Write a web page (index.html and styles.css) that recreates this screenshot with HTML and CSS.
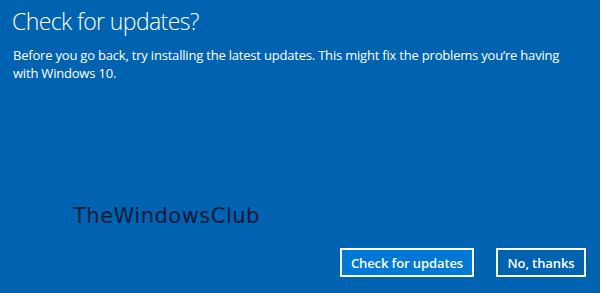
FILE: index.html
```html
<!DOCTYPE html>
<html>
<head>
<meta charset="utf-8">
<link rel="stylesheet" href="styles.css">
</head>
<body>
<div class="dialog">
  <div class="content">
    <h1 class="title">Check for updates?</h1>
    <p class="desc">Before you go back, try installing the latest updates. This might fix the problems you’re having with Windows 10.</p>
  </div>
  <div class="mark">TheWindowsClub</div>
  <div class="actions">
    <button class="btn primary">Check for updates</button>
    <button class="btn">No, thanks</button>
  </div>
</div>
</body>
</html>
```
FILE: styles.css
```css
html, body {
  margin: 0;
  padding: 0;
}
body {
  width: 600px;
  height: 293px;
  overflow: hidden;
  background: #0063b1;
  font-family: "Open Sans", "Noto Sans", sans-serif;
  color: #fff;
}
.dialog {
  height: 293px;
  display: flex;
  flex-direction: column;
  box-sizing: border-box;
  padding: 0 14px 0 12px;
}
.content {
  flex: 1;
}
.title {
  margin: 6px 0 0 0;
  font-weight: 300;
  font-size: 23px;
  line-height: 30px;
  letter-spacing: -0.6px;
}
.desc {
  margin: 10px 0 0 1px;
  font-size: 13px;
  line-height: 18px;
  width: 560px;
  letter-spacing: -0.2px;
}
.mark {
  font-family: "DejaVu Sans", sans-serif;
  color: #0b1b36;
  font-size: 21px;
  line-height: 24px;
  letter-spacing: 0.5px;
  padding-left: 61px;
  margin-bottom: 20px;
}
.actions {
  display: flex;
  justify-content: flex-end;
  gap: 22px;
  margin-bottom: 16px;
}
.btn {
  height: 29px;
  box-sizing: border-box;
  border: 2px solid #fff;
  background: transparent;
  color: #fff;
  font-family: "Open Sans", "Noto Sans", sans-serif;
  font-size: 13px;
  font-weight: 600;
  padding: 0;
  letter-spacing: -0.1px;
}
.btn.primary {
  background: #0078d7;
  width: 134px;
}
.btn.secondary, .btn:not(.primary) {
  width: 90px;
}
```
